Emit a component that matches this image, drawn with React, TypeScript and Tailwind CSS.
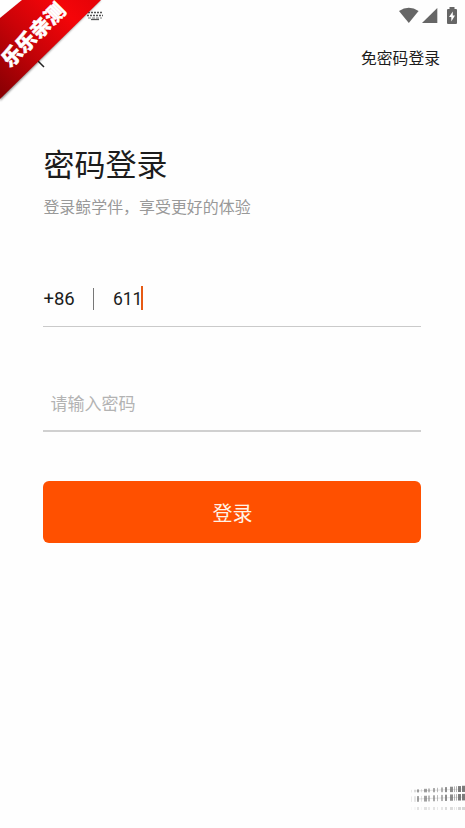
import { useState } from "react";

// x, width, opacity of each faded stroke in the corner mark
const MARKS = [
  [2, 1, 0.1],
  [5, 2, 0.12],
  [8, 2, 0.5],
  [12, 1, 0.15],
  [15, 3, 0.5],
  [19, 2, 0.35],
  [24, 2, 0.45],
  [28, 1, 0.35],
  [32, 2, 0.4],
  [36, 2, 0.6],
  [41, 3, 0.6],
  [45, 1, 0.4],
  [47, 1, 0.4],
  [49, 3, 0.7],
  [53, 3, 0.7],
];

function Ribbon() {
  return (
    <svg
      className="absolute left-0 top-0 z-10"
      width="108"
      height="108"
      viewBox="0 0 108 108"
    >
      <defs>
        <linearGradient id="ribbon" x1="0" y1="90" x2="90" y2="0" gradientUnits="userSpaceOnUse">
          <stop offset="0" stopColor="#8c0004" />
          <stop offset="0.45" stopColor="#cc0308" />
          <stop offset="0.8" stopColor="#f50509" />
          <stop offset="1" stopColor="#e80308" />
        </linearGradient>
        <filter id="shade" x="-10%" y="-10%" width="125%" height="125%">
          <feGaussianBlur stdDeviation="1.2" />
        </filter>
      </defs>
      <path d="M24 0H101L0 101V20Z" fill="#000" opacity="0.45" filter="url(#shade)" />
      <path d="M22 0H101L0 99V18Z" fill="url(#ribbon)" />
      <text
        x="32.5"
        y="34"
        transform="rotate(-45 32.5 34)"
        textAnchor="middle"
        dominantBaseline="central"
        fontSize="20"
        fontWeight="900"
        fill="#fff"
        stroke="#fff"
        strokeWidth="0.5"
        className="font-['Noto_Sans_CJK_SC',sans-serif]"
      >
        乐乐亲测
      </text>
    </svg>
  );
}

function StatusBar() {
  return (
    <div className="flex h-[31px] items-center justify-between pl-[87px] pr-2">
      <svg width="16" height="10" viewBox="0 0 16 10" stroke="#555" strokeWidth="1.3">
        <path d="M1 1.5H16M0 4.5H16" strokeDasharray="2 1" />
        <path d="M1 7H15" strokeDasharray="3 1" opacity="0.5" />
        <path d="M4 8.5H12" />
      </svg>
      <div className="flex items-center text-[#666]">
        <svg width="20" height="17" viewBox="0 0 20 17" fill="currentColor">
          <path d="M0 4Q9.8-2.5 19.6 4L9.8 16Z" />
        </svg>
        <svg className="ml-[3px]" width="16" height="17" viewBox="0 0 16 17" fill="currentColor">
          <path d="M15.3 1V16H0Z" />
        </svg>
        <svg className="ml-[9px]" width="10" height="17" viewBox="0 0 10 17" fill="currentColor">
          <path d="M2.5 0H7.5V2H9A1 1 0 0 1 10 3V16A1 1 0 0 1 9 17H1A1 1 0 0 1 0 16V3A1 1 0 0 1 1 2H2.5Z" />
          <path d="M5.8 4.5L2 10H4.3V14.5L8 8.5H5.8Z" fill="#fff" />
        </svg>
      </div>
    </div>
  );
}

function CornerMark() {
  return (
    <svg width="56" height="28" viewBox="0 0 56 28" fill="#444">
      {MARKS.map(([x, w, opacity]) => (
        <g key={x} opacity={opacity}>
          <rect x={x} y={6 - x * 0.08} width={w} height={2.5 + x * 0.07} />
          <rect x={x} y={12.5 - x * 0.05} width={w} height={5.5 + x * 0.02} />
          <rect x={x} y="23" width={w} height="3" opacity="0.3" />
        </g>
      ))}
      <path d="M8 15L56 13M5 7L56 5" stroke="#777" opacity="0.2" />
    </svg>
  );
}

export default function App() {
  const [phone, setPhone] = useState("611");
  const [password, setPassword] = useState("");

  return (
    <div className="relative flex h-[828px] w-[465px] flex-col overflow-hidden bg-[#fefefe] font-[Roboto,'Noto_Sans_CJK_SC',sans-serif] text-[#1c1c1c]">
      <Ribbon />
      <StatusBar />

      <header className="flex h-14 items-center justify-between pl-[33px] pr-[25px]">
        <svg width="12" height="18" viewBox="0 0 12 18" fill="none" stroke="#222" strokeWidth="1.5">
          <path d="M11 1L3 9L11 17" />
        </svg>
        <button className="text-[15.8px]">免密码登录</button>
      </header>

      <main className="flex flex-col pl-[43.4px] pr-[43.6px]">
        <h1 className="mt-[56px] text-[31px] leading-[46px]">密码登录</h1>
        <p className="mt-[7px] text-[15.95px] leading-6 text-[#999]">登录鲸学伴，享受更好的体验</p>

        <div className="mt-[50px] flex h-[57px] items-center border-b-[1.5px] border-[#cacaca] pt-[2px]">
          <span className="w-[49.5px] pt-[2px] text-[18.5px]">+86</span>
          <span className="h-[22px] w-px bg-[#777]" />
          <div className="relative ml-[19px]">
            <input
              className="block w-[300px] text-[17.5px] outline-none"
              value={phone}
              onChange={(e) => setPhone(e.target.value)}
            />
            <span className="absolute left-[28px] top-0 h-6 w-[2.5px] bg-[#e65a14]" />
          </div>
        </div>

        <div className="mt-[49px] flex h-[56px] items-center border-b-2 border-[#d0d0d0] pl-[7px] pt-[3px]">
          <input
            type="password"
            className="w-full text-[17px] outline-none placeholder:text-[#b3b3b3]"
            placeholder="请输入密码"
            value={password}
            onChange={(e) => setPassword(e.target.value)}
          />
        </div>

        <button className="mt-[49px] h-[62px] w-[378px] rounded-md bg-[#ff5000] pt-[3px] text-[20px] text-[#fff3e6]">
          登录
        </button>
      </main>

      <footer className="mt-auto flex justify-end pb-[16px]">
        <CornerMark />
      </footer>
    </div>
  );
}
